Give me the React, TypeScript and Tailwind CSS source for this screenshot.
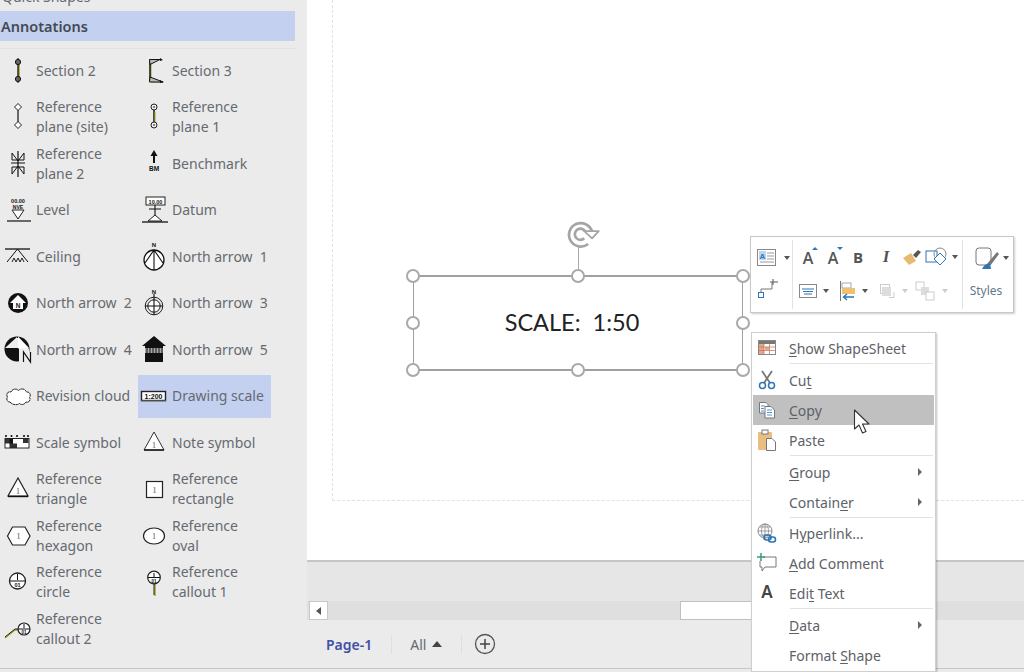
import type { ReactNode } from 'react';

const Y = '#a8a020';

function SmallText({ x, y, size = 6, children, fill = '#111' }: { x: number; y: number; size?: number; children: ReactNode; fill?: string }) {
    return (
        <text x={x} y={y} fontSize={size} fontWeight={700} textAnchor="middle" fill={fill} fontFamily="Liberation Sans, sans-serif">
            {children}
        </text>
    );
}

const shapeIcons: Record<string, ReactNode> = {
    section2: (
        <>
            <path d="M15 6V23" stroke={Y} strokeWidth="1.5" />
            <path d="M14 5V22" stroke="#111" strokeWidth="1.3" />
            <path d="M14 1V3M14 24V26" stroke="#111" />
            <circle cx="14" cy="5" r="2.6" fill="#666" stroke="#111" />
            <circle cx="14" cy="22" r="2.6" fill="#666" stroke="#111" />
        </>
    ),
    section3: (
        <>
            <path d="M11 4V25H24" stroke={Y} fill="none" />
            <path d="M10 3V24" stroke="#111" strokeWidth="1.5" />
            <path d="M9.5 2.5H20L10 7.5Z" fill="#bbb" stroke="#111" />
            <path d="M9.5 25H23L10 20Z" fill="#bbb" stroke="#111" />
            <path d="M20 1L23 3L20 4ZM20 23L23 25L20 26Z" fill="#111" />
        </>
    ),
    planeSite: (
        <>
            <path d="M14 7V19" stroke="#333" strokeWidth="1.4" />
            <path d="M14 0.5L17.5 4L14 7.5L10.5 4Z" fill="#fff" stroke="#222" />
            <path d="M14 18.5L17.5 22L14 25.5L10.5 22Z" fill="#fff" stroke="#222" />
        </>
    ),
    plane1: (
        <>
            <path d="M14 7V19" stroke="#222" strokeWidth="1.6" />
            <path d="M15 9V20" stroke={Y} />
            <circle cx="14" cy="4" r="3" fill="#eee" stroke="#222" />
            <circle cx="14" cy="22" r="3" fill="#eee" stroke="#222" />
            <path d="M14 3V5M14 21V23" stroke="#222" />
        </>
    ),
    plane2: (
        <>
            <path d="M14 1V27M7 13H21" stroke="#111" strokeWidth="1.2" />
            <path d="M8 3L14 11L20 3V10H8Z" fill="none" stroke="#111" />
            <path d="M8 24L14 16L20 24V17H8Z" fill="none" stroke="#111" />
        </>
    ),
    benchmark: (
        <>
            <path d="M14 3V13" stroke="#111" strokeWidth="2" />
            <path d="M14 0L17.5 6H10.5Z" fill="#111" />
            <SmallText x={14} y={21} size={6.5}>BM</SmallText>
        </>
    ),
    level: (
        <>
            <SmallText x={14} y={7} size={5.5}>00.00</SmallText>
            <SmallText x={14} y={13} size={5}>NVE</SmallText>
            <path d="M8 14L14 23L20 14H8Z" fill="#fff" stroke="#222" />
            <path d="M3 25H27" stroke="#111" strokeWidth="1.2" />
        </>
    ),
    datum: (
        <>
            <rect x="6" y="1" width="19" height="8" fill="#fff" stroke="#222" />
            <SmallText x={15.5} y={7.5} size={5.5}>10.00</SmallText>
            <path d="M15 9V19M9 13H21" stroke="#111" strokeWidth="1.1" />
            <path d="M15 19L8 25H22Z" fill="#fff" stroke="#222" />
            <path d="M2 26H28" stroke="#111" strokeWidth="1.3" />
        </>
    ),
    ceiling: (
        <>
            <path d="M1 6H26" stroke="#111" strokeWidth="1.3" />
            <path d="M3 19L13.5 6L24 19" fill="none" stroke="#111" />
            <path d="M8 19L10 15L12 19L14 15L16 19L18 15L20 19" stroke="#222" fill="none" strokeWidth="1" />
        </>
    ),
    north1: (
        <>
            <SmallText x={14} y={4} size={6}>N</SmallText>
            <circle cx="14" cy="17" r="10" fill="#fff" stroke="#111" strokeWidth="1.3" />
            <path d="M14 7V27M14 7L5 20M14 7L23 20" stroke="#111" fill="none" strokeWidth="1.1" />
        </>
    ),
    north2: (
        <>
            <circle cx="14" cy="14" r="10" fill="#111" />
            <path d="M14 6L22 14H19V20H9V14H6Z" fill="#fff" />
            <SmallText x={14} y={19} size={6.5}>N</SmallText>
        </>
    ),
    north3: (
        <>
            <SmallText x={14} y={5} size={6}>N</SmallText>
            <circle cx="14" cy="17" r="8.8" fill="none" stroke="#222" />
            <circle cx="14" cy="17" r="6.2" fill="#fff" stroke="#111" />
            <path d="M14 5V26M5 17H23" stroke="#111" strokeWidth="1.1" />
        </>
    ),
    north4: (
        <>
            <circle cx="13" cy="13" r="12.5" fill="#111" />
            <path d="M13 1L25 13V26H15V12H1Z" fill="#eee" stroke="none" />
            <path d="M13 1L25 13" stroke="#111" />
            <path d="M14 0.5L25.5 12.5H14Z" fill="#fff" />
            <path d="M19.5 26V16L26.5 26V16" stroke="#111" fill="none" strokeWidth="1.2" />
        </>
    ),
    north5: (
        <>
            <path d="M14 0L26 10H23V26H5V10H2Z" fill="#111" />
            <rect x="5" y="12" width="18" height="5" fill="#aaa" />
            <path d="M7 12V17M10 12V17M13 12V17M16 12V17M19 12V17M22 12V17" stroke="#111" />
        </>
    ),
    cloud: (
        <path
            d="M6 20C3 20 2 17 3.5 15C1.5 12 4 9 7 10C8 7 12 6 14.5 8.5C17 6 21 6.5 22.5 10C25.5 9.5 27.5 13 25.5 15.5C27 18 25 21 22 20C20.5 23 17 23 15.5 21.5C13 23.5 8.5 23 6 20Z"
            fill="#fff"
            stroke="#222"
            strokeWidth="1"
            strokeDasharray="3 0.4"
        />
    ),
    scale: (
        <>
            <rect x="1" y="9.5" width="24" height="9.5" fill="#333" stroke="#222" />
            <rect x="13" y="10" width="11.5" height="8.5" fill="#fff" />
            <rect x="1.5" y="14.5" width="4" height="4" fill="#fff" />
            <rect x="9" y="10" width="4" height="4.5" fill="#fff" />
            <rect x="5.5" y="10" width="3.5" height="4.5" fill="#111" />
            <rect x="19" y="10" width="5.5" height="4" fill="#333" />
            <path d="M2 6V8M7.5 6V8M13 6V8M20 6V8M24 6V8" stroke="#111" strokeWidth="1.6" />
        </>
    ),
    drawingScale: (
        <>
            <rect x="1.5" y="9.5" width="24" height="9" fill="#fff" stroke="#222" strokeWidth="1.4" />
            <rect x="1" y="18.5" width="25" height="1" fill="#777" />
            <SmallText x={13.5} y={16.5} size={7}>1:200</SmallText>
        </>
    ),
    note: (
        <>
            <path d="M14 3L4 21H24Z" fill="#fff" stroke="#333" />
            <path d="M4 21H24" stroke="#111" strokeWidth="1.4" />
            <text x="14" y="19" fontSize="9" textAnchor="middle" fill="#666" fontFamily="Liberation Serif, serif">1</text>
        </>
    ),
    refTriangle: (
        <>
            <path d="M14 3L4 21H24Z" fill="#fff" stroke="#222" strokeWidth="1.2" />
            <path d="M4 21.5H24" stroke="#111" strokeWidth="1.4" />
            <text x="14" y="19" fontSize="9" textAnchor="middle" fill="#666" fontFamily="Liberation Serif, serif">1</text>
        </>
    ),
    refRect: (
        <>
            <rect x="6.5" y="6.5" width="16" height="16" fill="#fff" stroke="#222" strokeWidth="1.2" />
            <text x="14.5" y="18" fontSize="9" textAnchor="middle" fill="#666" fontFamily="Liberation Serif, serif">1</text>
        </>
    ),
    refHex: (
        <>
            <path d="M3.5 14L8.5 5H21L26 14L21 23H8.5Z" fill="#fff" stroke="#222" strokeWidth="1.2" />
            <text x="14.5" y="17" fontSize="9" textAnchor="middle" fill="#666" fontFamily="Liberation Serif, serif">1</text>
        </>
    ),
    refOval: (
        <>
            <ellipse cx="14" cy="14" rx="10.5" ry="8" fill="#fff" stroke="#222" strokeWidth="1.2" />
            <text x="14" y="17" fontSize="9" textAnchor="middle" fill="#666" fontFamily="Liberation Serif, serif">1</text>
        </>
    ),
    refCircle: (
        <>
            <circle cx="13.5" cy="13" r="8" fill="#fff" stroke="#222" strokeWidth="1.3" />
            <path d="M5.5 13H21.5M13.5 6V12" stroke="#111" />
            <SmallText x={13.5} y={19} size={5.5}>01</SmallText>
        </>
    ),
    refCallout1: (
        <>
            <path d="M15 12V28" stroke={Y} strokeWidth="1.5" />
            <path d="M14 14V27" stroke="#222" />
            <circle cx="14" cy="9.5" r="6.3" fill="#fff" stroke="#222" strokeWidth="1.2" />
            <path d="M8 9.5H20M14 5V9" stroke="#111" />
            <SmallText x={14} y={14.5} size={4.5}>01</SmallText>
        </>
    ),
    refCallout2: (
        <>
            <path d="M1 23L11 15H15" stroke={Y} fill="none" strokeWidth="1.4" />
            <path d="M1 22L11 14H15" stroke="#222" fill="none" />
            <circle cx="20" cy="14" r="6" fill="#fff" stroke="#222" strokeWidth="1.2" />
            <path d="M14 14H26M20 9V13" stroke="#111" />
            <SmallText x={20} y={19} size={4.5}>01</SmallText>
        </>
    ),
};

const shapes: { icon: string; lines: string[]; active?: boolean }[] = [
    { icon: 'section2', lines: ['Section 2'] },
    { icon: 'section3', lines: ['Section 3'] },
    { icon: 'planeSite', lines: ['Reference', 'plane (site)'] },
    { icon: 'plane1', lines: ['Reference', 'plane 1'] },
    { icon: 'plane2', lines: ['Reference', 'plane 2'] },
    { icon: 'benchmark', lines: ['Benchmark'] },
    { icon: 'level', lines: ['Level'] },
    { icon: 'datum', lines: ['Datum'] },
    { icon: 'ceiling', lines: ['Ceiling'] },
    { icon: 'north1', lines: ['North arrow  1'] },
    { icon: 'north2', lines: ['North arrow  2'] },
    { icon: 'north3', lines: ['North arrow  3'] },
    { icon: 'north4', lines: ['North arrow  4'] },
    { icon: 'north5', lines: ['North arrow  5'] },
    { icon: 'cloud', lines: ['Revision cloud'] },
    { icon: 'drawingScale', lines: ['Drawing scale'], active: true },
    { icon: 'scale', lines: ['Scale symbol'] },
    { icon: 'note', lines: ['Note symbol'] },
    { icon: 'refTriangle', lines: ['Reference', 'triangle'] },
    { icon: 'refRect', lines: ['Reference', 'rectangle'] },
    { icon: 'refHex', lines: ['Reference', 'hexagon'] },
    { icon: 'refOval', lines: ['Reference', 'oval'] },
    { icon: 'refCircle', lines: ['Reference', 'circle'] },
    { icon: 'refCallout1', lines: ['Reference', 'callout 1'] },
    { icon: 'refCallout2', lines: ['Reference', 'callout 2'] },
];

function ShapeCell({ icon, lines, active }: { icon: string; lines: string[]; active?: boolean }) {
    return (
        <div className={`flex h-[43px] w-[133px] items-center ${active ? 'bg-[#c3d0f0]' : ''}`}>
            <svg viewBox="0 0 28 28" className="ml-[2px] mr-[4px] h-[28px] w-[28px] shrink-0 overflow-visible">
                {shapeIcons[icon]}
            </svg>
            <div className="whitespace-pre text-[14px] leading-[20px] text-[#666a70]">
                {lines.map((l) => (
                    <div key={l}>{l}</div>
                ))}
            </div>
        </div>
    );
}

function Sidebar() {
    return (
        <div className="flex w-[307px] shrink-0 flex-col bg-[#ebebeb]">
            <div className="flex h-[11px] items-end overflow-hidden pl-[2px]">
                <span className="-translate-y-[4px] text-[14px] leading-[20px] text-[#666a70]">Quick Shapes</span>
            </div>
            <div className="flex h-[30px] w-[295px] items-center bg-[#c3d0f0] pl-[1px] pt-[1px] text-[14.5px] font-semibold text-[#444a50]">
                Annotations
            </div>
            <div className="mt-[7px] h-px w-[295px] bg-[#e1e1e1]" />
            <div className="-mt-[1.5px] grid grid-cols-[136px_136px] auto-rows-[46.5px] items-center pl-[2px]">
                {shapes.map((s) => (
                    <ShapeCell key={s.icon} {...s} />
                ))}
            </div>
        </div>
    );
}

function Handle({ className }: { className: string }) {
    return <div className={`absolute h-[14px] w-[14px] rounded-full border-2 border-[#a9a9a9] bg-white ${className}`} />;
}

function Canvas() {
    return (
        <div className="relative flex-1 overflow-hidden bg-white">
            <div className="absolute left-[25px] right-0 top-0 h-[501px] border-b border-l border-dashed border-[#e2e2e2]" />
            <svg viewBox="0 0 34 30" className="absolute left-[256px] top-[218px] h-[34px] w-[38px]">
                <path d="M26 12A10.5 10.5 0 1 0 22.5 23" fill="none" stroke="#a5a5a5" strokeWidth="2.4" />
                <path d="M20 12A5 5 0 1 0 19 18" fill="none" stroke="#a5a5a5" strokeWidth="2.4" />
                <path d="M19 11.5H32L26 18Z" fill="#fff" stroke="#a5a5a5" strokeWidth="1.6" strokeLinejoin="round" />
            </svg>
            <div className="absolute left-[271px] top-[247px] h-[29px] w-px bg-[#aaa]" />
            <div className="absolute left-[106px] top-[275px] flex h-[96px] w-[330px] items-center justify-center border-x border-y-2 border-x-[#a0a0a0] border-y-[#a0a0a0]">
                <span className="pr-[12px] font-['Lato',sans-serif] text-[23.5px] text-[#222]">SCALE:&nbsp; 1:50</span>
                <Handle className="-left-[8px] -top-[8px]" />
                <Handle className="left-[157px] -top-[8px]" />
                <Handle className="-right-[8px] -top-[8px]" />
                <Handle className="-left-[8px] top-[39px]" />
                <Handle className="-right-[8px] top-[39px]" />
                <Handle className="-bottom-[8px] -left-[8px]" />
                <Handle className="-bottom-[8px] left-[157px]" />
                <Handle className="-bottom-[8px] -right-[8px]" />
            </div>
        </div>
    );
}

function Caret({ dim }: { dim?: boolean }) {
    return <div className={`h-0 w-0 border-x-[3.5px] border-t-[4px] border-x-transparent ${dim ? 'border-t-[#ccc]' : 'border-t-[#555]'}`} />;
}

function Tool({ w, h = 22, vb, children }: { w: number; h?: number; vb?: string; children: ReactNode }) {
    return (
        <svg viewBox={vb ?? `0 0 ${w} ${h}`} style={{ width: w, height: h }} className="shrink-0 overflow-visible">
            {children}
        </svg>
    );
}

function GrowA({ up }: { up: boolean }) {
    return (
        <div className="relative flex h-[22px] w-[22px] items-end">
            <svg viewBox="0 0 22 6" className="absolute left-0 top-0 h-[6px] w-[22px]">
                <path d={up ? 'M13 4L16 1L19 4Z' : 'M13 1L16 4L19 1Z'} fill="#2e75b6" />
            </svg>
            <span className="w-[18px] text-center font-['Open_Sans',sans-serif] text-[16px] font-semibold leading-[20px] text-[#555]">A</span>
        </div>
    );
}

function Toolbar() {
    return (
        <div className="absolute left-[750px] top-[236px] flex h-[77px] w-[264px] border border-[#c8c8c8] bg-white py-[3px] shadow-[1px_1px_2px_rgba(0,0,0,0.2)]">
            <div className="flex w-[42px] flex-col gap-[11px] border-r border-[#e3e3e3] pl-[6px] pt-[8px]">
                <div className="flex items-center gap-[7px]">
                    <Tool w={20} h={19}>
                        <rect x="0.5" y="1.5" width="18" height="16" fill="#fff" stroke="#888" />
                        <rect x="2" y="3" width="7" height="9" fill="#bcd4ec" />
                        <text x="5.5" y="11" fontSize="8" fontWeight="700" textAnchor="middle" fill="#2e75b6" fontFamily="Liberation Sans, sans-serif">A</text>
                        <path d="M10 5H17M10 8H17M10 11H17M3 14H17" stroke="#999" />
                    </Tool>
                    <Caret />
                </div>
                <Tool w={22} h={22}>
                    <rect x="1.5" y="14.5" width="5" height="5" fill="#fff" stroke="#2e75b6" />
                    <path d="M4 14V11H15V5" fill="none" stroke="#777" />
                    <path d="M15 2V8M12 5H20" stroke="#555" transform="translate(1 -1)" />
                </Tool>
            </div>
            <div className="flex w-[170px] flex-col gap-[12px] border-r border-[#e3e3e3] pt-[6px]">
                <div className="flex h-[22px] items-center pl-[6px]">
                    <GrowA up />
                    <div className="w-[3px]" />
                    <GrowA up={false} />
                    <span className="ml-[2px] w-[20px] text-center font-['Open_Sans',sans-serif] text-[15px] font-bold text-[#555]">B</span>
                    <span className="ml-[8px] w-[20px] text-center font-['Liberation_Serif',serif] text-[17px] font-bold italic text-[#555]">I</span>
                    <div className="w-[6px]" />
                    <Tool w={20} h={20}>
                        <path d="M1 11L9 6L14 14L7 18C5 16 3 13 1 11Z" fill="#e8b970" />
                        <path d="M11 8L16 3L19 5L14 11Z" fill="#555" />
                    </Tool>
                    <div className="w-[3px]" />
                    <Tool w={24} h={20}>
                        <rect x="1" y="4" width="11" height="11" fill="#fff" stroke="#2e75b6" />
                        <circle cx="15" cy="7" r="6" fill="none" stroke="#888" />
                        <path d="M15 6L21 12L15 18L9 12Z" fill="#fff" stroke="#2e75b6" />
                    </Tool>
                    <div className="ml-[3px]"><Caret /></div>
                </div>
                <div className="flex h-[22px] items-center pl-[6px]">
                    <Tool w={18} h={16}>
                        <rect x="0.5" y="1.5" width="17" height="13" fill="#fff" stroke="#888" />
                        <path d="M3 6H15M4 8.5H14M5 11H13" stroke="#2e75b6" />
                    </Tool>
                    <div className="ml-[6px]"><Caret /></div>
                    <div className="w-[10px]" />
                    <Tool w={17} h={20}>
                        <path d="M1.5 0V20" stroke="#777" />
                        <rect x="3" y="2" width="9" height="5" fill="#fff" stroke="#aaa" />
                        <rect x="3" y="7" width="13" height="6" fill="#eec070" />
                        <path d="M15 16H5M8 13L4.5 16L8 19" fill="none" stroke="#2e75b6" strokeWidth="1.4" />
                    </Tool>
                    <div className="ml-[6px]"><Caret /></div>
                    <div className="w-[11px]" />
                    <Tool w={16} h={16}>
                        <rect x="1.5" y="1.5" width="9" height="9" fill="none" stroke="#ccc" />
                        <rect x="3" y="4" width="9" height="9" fill="#ddd" />
                        <path d="M10 14.5H15V9" fill="none" stroke="#ccc" />
                    </Tool>
                    <div className="ml-[7px]"><Caret dim /></div>
                    <div className="w-[7px]" />
                    <Tool w={20} h={20}>
                        <rect x="1" y="1" width="8" height="8" fill="#fff" stroke="#ccc" />
                        <rect x="6" y="6" width="8" height="8" fill="#ddd" />
                        <rect x="11" y="11" width="8" height="8" fill="#fff" stroke="#ccc" />
                    </Tool>
                    <div className="ml-[7px]"><Caret dim /></div>
                </div>
            </div>
            <div className="flex flex-1 flex-col items-center pl-[8px] pt-[6px]">
                <div className="flex items-center gap-[2px]">
                    <Tool w={26} h={24}>
                        <rect x="1" y="2" width="15" height="17" rx="3" fill="#fff" stroke="#777" />
                        <path d="M12 18L22 6L24 8L15 20Z" fill="#777" />
                        <path d="M7 23C9 18 13 17 15 18L16 23Z" fill="#2e75b6" />
                    </Tool>
                    <Caret />
                </div>
                <span className="-ml-[12px] mt-[13px] text-[12px] leading-[16px] text-[#66788a]">Styles</span>
            </div>
        </div>
    );
}

function Sep({ mb = 1 }: { mb?: number }) {
    return <div style={{ marginBottom: mb }} className="ml-[37px] mr-px h-px bg-[#e2e2e2]" />;
}

function MenuItem({ icon, arrow, active, children }: { icon?: ReactNode; arrow?: boolean; active?: boolean; children: ReactNode }) {
    return (
        <div className={`relative flex h-[30px] items-center text-[14px] text-[#5d6268] ${active ? 'bg-[#c0c0c0]' : ''}`}>
            <div className="flex w-[36px] shrink-0 items-center justify-center pr-[8px]">{icon}</div>
            <span className="whitespace-pre">{children}</span>
            {arrow && <div className="absolute right-[12px] h-0 w-0 border-y-[4px] border-l-[4px] border-y-transparent border-l-[#666]" />}
        </div>
    );
}

function U({ children }: { children: ReactNode }) {
    return <span className="underline decoration-1 underline-offset-2">{children}</span>;
}

function ContextMenu() {
    return (
        <div className="absolute left-[751px] top-[332px] h-[340px] w-[185px] border border-[#cfcfcf] bg-white px-px shadow-[1px_1px_2px_rgba(0,0,0,0.25)]">
            <MenuItem
                icon={
                    <svg viewBox="0 0 18 16" className="h-[16px] w-[18px]">
                        <rect x="0.5" y="0.5" width="17" height="14" fill="#fff" stroke="#888" />
                        <rect x="1" y="1" width="16" height="3" fill="#777" />
                        <path d="M1 4H6V14H1ZM7 7H11V10H7Z" fill="#e4a78e" />
                        <path d="M1 7H17M1 10.5H17M6 4V14M11.5 4V14" stroke="#c96e4f" strokeWidth="0.7" />
                    </svg>
                }
            >
                <U>S</U>how ShapeSheet
            </MenuItem>
            <Sep />
            <MenuItem
                icon={
                    <svg viewBox="0 0 18 20" className="h-[20px] w-[18px]">
                        <path d="M4 1L12 13M14 1L6 13" stroke="#777" strokeWidth="1.8" />
                        <circle cx="4.5" cy="15.5" r="3" fill="none" stroke="#2e75b6" strokeWidth="1.5" />
                        <circle cx="13.5" cy="15.5" r="3" fill="none" stroke="#2e75b6" strokeWidth="1.5" />
                    </svg>
                }
            >
                Cu<U>t</U>
            </MenuItem>
            <MenuItem
                active
                icon={
                    <svg viewBox="0 0 18 18" className="h-[18px] w-[18px]">
                        <path d="M1.5 1.5H8L10 3.5V12H1.5Z" fill="#fff" stroke="#777" />
                        <path d="M7 5.5H13L16.5 9V17H7Z" fill="#fff" stroke="#777" />
                        <path d="M3 5H7M3 7.5H6M3 10H6M9 9H14M9 11.5H14M9 14H14" stroke="#2e75b6" strokeWidth="0.8" />
                    </svg>
                }
            >
                <U>C</U>opy
            </MenuItem>
            <MenuItem
                icon={
                    <svg viewBox="0 0 20 22" className="h-[22px] w-[20px]">
                        <rect x="1" y="3" width="14" height="18" rx="1" fill="#e8bf80" />
                        <rect x="5" y="1" width="6" height="4" fill="#fff" stroke="#777" />
                        <path d="M9.5 9.5H15L18.5 13V21.5H9.5Z" fill="#fff" stroke="#777" />
                    </svg>
                }
            >
                Paste
            </MenuItem>
            <Sep />
            <MenuItem arrow>
                <U>G</U>roup
            </MenuItem>
            <MenuItem arrow>
                Contain<U>e</U>r
            </MenuItem>
            <Sep mb={0} />
            <MenuItem
                icon={
                    <svg viewBox="0 0 20 20" className="h-[20px] w-[20px]">
                        <circle cx="8" cy="8" r="7" fill="#fff" stroke="#888" />
                        <path d="M1 8H15M8 1V15M3 4H13M3 12H13" stroke="#888" strokeWidth="0.8" />
                        <ellipse cx="8" cy="8" rx="3.5" ry="7" fill="none" stroke="#888" strokeWidth="0.8" />
                        <rect x="7" y="12" width="7" height="5" rx="2.5" fill="none" stroke="#2e75b6" strokeWidth="1.6" />
                        <rect x="11.5" y="14" width="7" height="5" rx="2.5" fill="none" stroke="#2e75b6" strokeWidth="1.6" />
                    </svg>
                }
            >
                H<U>y</U>perlink...
            </MenuItem>
            <MenuItem
                icon={
                    <svg viewBox="0 0 20 20" className="h-[20px] w-[20px]">
                        <path d="M6 4H19V14H8L5 18V14H3V8" fill="none" stroke="#777" />
                        <path d="M4 0V8M0 4H8" stroke="#3a9a7a" strokeWidth="1.5" />
                    </svg>
                }
            >
                <U>A</U>dd Comment
            </MenuItem>
            <MenuItem icon={<span className="-mt-[3px] text-[17px] font-semibold text-[#444]">A</span>}>
                Edi<U>t</U> Text
            </MenuItem>
            <Sep />
            <MenuItem arrow>
                <U>D</U>ata
            </MenuItem>
            <MenuItem>
                Format <U>S</U>hape
            </MenuItem>
        </div>
    );
}

function PageBar() {
    return (
        <div className="shrink-0">
            <div className="h-[41px] border-t-2 border-[#c6c6c9] bg-[#e6e6e6]" />
            <div className="flex h-[19px] bg-[#dfdfdf] pl-[2px]">
                <div className="flex h-[19px] w-[19px] items-center justify-center border border-[#c8c8c8] bg-white">
                    <div className="h-0 w-0 border-y-[4.5px] border-r-[5px] border-y-transparent border-r-[#555]" />
                </div>
                <div className="ml-[352px] h-[19px] w-[90px] border border-[#c0c0c0] bg-white" />
            </div>
            <div className="flex h-[48px] items-center text-[14px]">
                <span className="ml-[19px] font-semibold text-[#3f51a5]">Page-1</span>
                <div className="ml-[19px] h-[19px] w-px bg-[#dfdfdf]" />
                <span className="ml-[18px] text-[#666a70]">All</span>
                <div className="ml-[6px] h-0 w-0 border-x-[5px] border-b-[6px] border-x-transparent border-b-[#444]" />
                <div className="ml-[19px] h-[19px] w-px bg-[#dfdfdf]" />
                <svg viewBox="0 0 22 22" className="ml-[12px] h-[22px] w-[22px]">
                    <circle cx="11" cy="11" r="9.5" fill="none" stroke="#555" strokeWidth="1.3" />
                    <path d="M11 6V16M6 11H16" stroke="#444" strokeWidth="1.5" />
                </svg>
            </div>
        </div>
    );
}

export default function App() {
    return (
        <div className="relative flex h-[672px] w-[1024px] flex-col overflow-hidden bg-[#ebebeb] font-['Noto_Sans',sans-serif]">
            <div className="flex h-[668px]">
                <Sidebar />
                <div className="flex flex-1 flex-col">
                    <Canvas />
                    <PageBar />
                </div>
            </div>
            <div className="h-px bg-[#c6c6c6]" />
            <Toolbar />
            <ContextMenu />
            <svg viewBox="0 0 18 26" className="absolute left-[853px] top-[409px] h-[26px] w-[18px]">
                <path d="M1.5 1V20L6 16L9.5 24L13 22.5L9.5 15H16Z" fill="#fff" stroke="#333" strokeWidth="1.1" strokeLinejoin="round" />
            </svg>
        </div>
    );
}
